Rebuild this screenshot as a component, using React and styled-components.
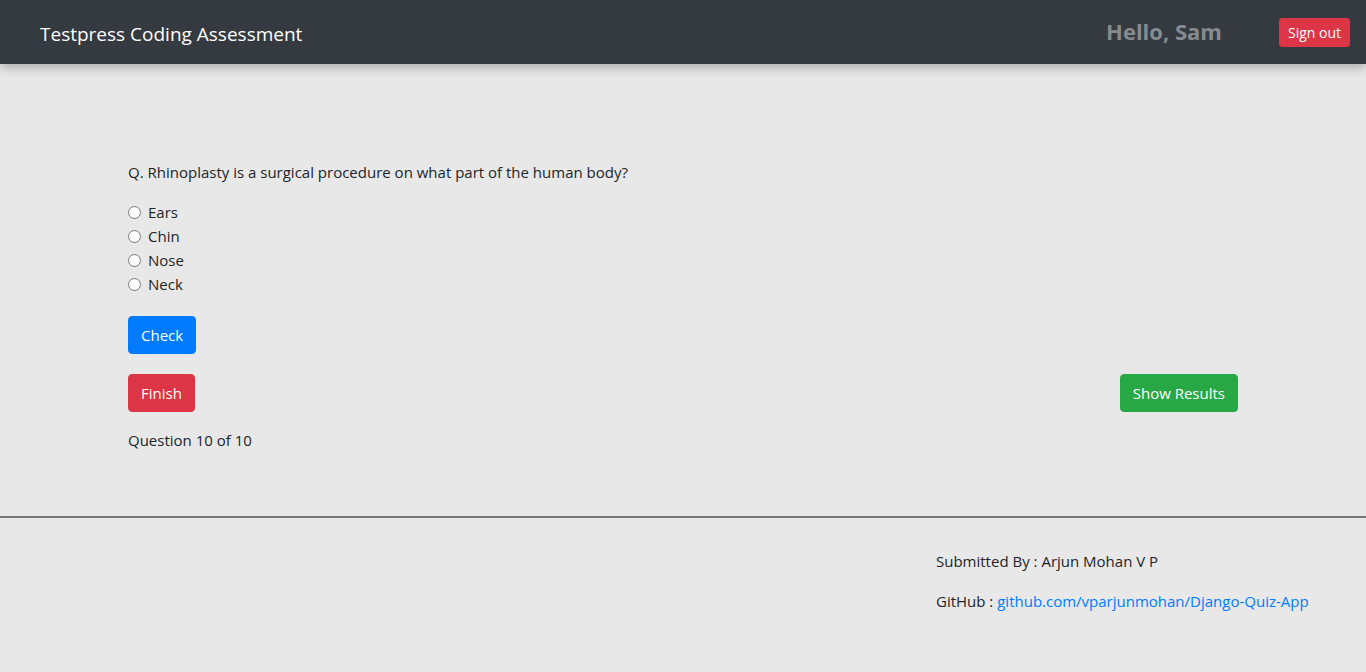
import React from 'react';
import styled, { createGlobalStyle } from 'styled-components';

const GlobalStyle = createGlobalStyle`
  body {
    margin: 0;
    background: #e8e8e8;
    font-family: "Segoe UI", "Open Sans", "Noto Sans", sans-serif;
    font-size: 15px;
    line-height: 24px;
    color: #212529;
  }
  * { box-sizing: border-box; }
`;

const options = ['Ears', 'Chin', 'Nose', 'Neck'];

const App = () => {
  return (
    <Page>
      <GlobalStyle />
      <Navbar>
        <Brand>Testpress Coding Assessment</Brand>
        <NavRight>
          <Greeting>Hello, Sam</Greeting>
          <Button variant="danger" small>Sign out</Button>
        </NavRight>
      </Navbar>

      <Container>
        <Question>Q. Rhinoplasty is a surgical procedure on what part of the human body?</Question>
        <Options>
          {options.map(opt => (
            <OptionLabel key={opt}>
              <Radio type="radio" name="answer" value={opt} />
              {opt}
            </OptionLabel>
          ))}
        </Options>
        <Button variant="primary">Check</Button>
        <ActionRow>
          <Button variant="danger">Finish</Button>
          <Button variant="success">Show Results</Button>
        </ActionRow>
        <Progress>Question 10 of 10</Progress>
      </Container>

      <Divider />

      <Footer>
        <FooterText>
          <FooterLine>Submitted By : Arjun Mohan V P</FooterLine>
          <FooterLine>
            GitHub : <Link href="#">github.com/vparjunmohan/Django-Quiz-App</Link>
          </FooterLine>
        </FooterText>
      </Footer>
    </Page>
  );
};

const colors = {
  primary: '#007bff',
  danger: '#dc3545',
  success: '#28a745',
};

const Page = styled.div`
  min-height: 672px;
`;

const Navbar = styled.nav`
  height: 64px;
  background: #343a40;
  display: flex;
  align-items: center;
  justify-content: space-between;
  padding: 0 16px 0 40px;
  box-shadow: 0 4px 10px rgba(0, 0, 0, 0.25);
`;

const Brand = styled.div`
  color: #fff;
  font-size: 19px;
  padding-top: 4px;
`;

const NavRight = styled.div`
  display: flex;
  align-items: center;
  gap: 57px;
`;

const Greeting = styled.div`
  color: #878b90;
  font-size: 22px;
  font-weight: 700;
  margin-top: -3px;
`;

const Button = styled.button`
  font-family: inherit;
  color: #fff;
  background: ${p => colors[p.variant]};
  border: 1px solid ${p => colors[p.variant]};
  border-radius: ${p => (p.small ? '3px' : '4px')};
  font-size: ${p => (p.small ? '14px' : '15px')};
  line-height: ${p => (p.small ? '19px' : '24px')};
  padding: ${p => (p.small ? '4px 8px' : '6px 12px')};
  margin-top: ${p => (p.small ? '1px' : '0')};
  cursor: pointer;
`;

const Container = styled.main`
  width: 1110px;
  margin: 0 auto;
  padding: 96px 0 64px;
`;

const Question = styled.p`
  margin: 0 0 16px;
`;

const Options = styled.div`
  display: flex;
  flex-direction: column;
  margin-bottom: 20px;
`;

const OptionLabel = styled.label`
  display: flex;
  align-items: center;
  height: 24px;
`;

const Radio = styled.input`
  width: 13px;
  height: 13px;
  margin: 0 7px 0 0;
`;

const ActionRow = styled.div`
  display: flex;
  justify-content: space-between;
  margin: 20px 0 16px;
`;

const Progress = styled.p`
  margin: 0;
`;

const Divider = styled.hr`
  margin: 0;
  border: 0;
  border-top: 2px solid #777;
`;

const Footer = styled.footer`
  display: grid;
  grid-template-columns: 936px 1fr;
  padding: 31px 0 40px;
`;

const FooterText = styled.div`
  grid-column: 2;
`;

const FooterLine = styled.p`
  margin: 0 0 16px;
`;

const Link = styled.a`
  color: #007bff;
  text-decoration: none;
`;

export default App;
